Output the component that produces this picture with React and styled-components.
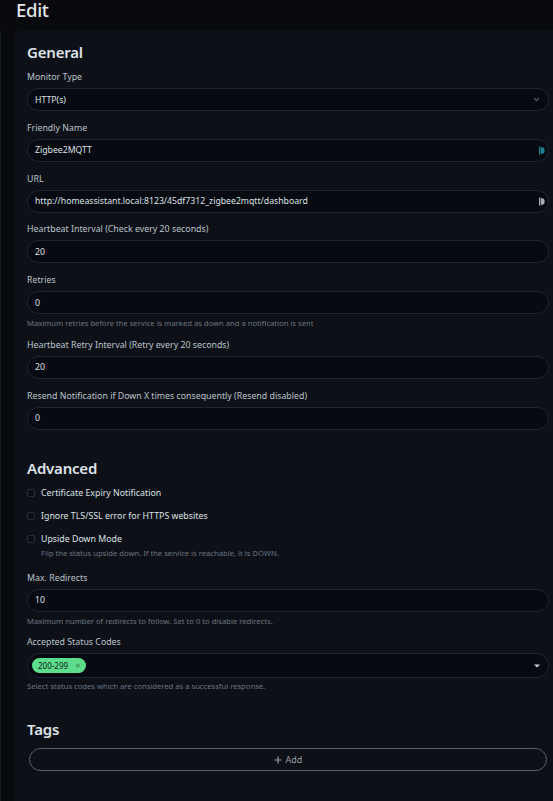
import React from 'react';
import styled, { createGlobalStyle } from 'styled-components';

const GlobalStyle = createGlobalStyle`
  html, body {
    margin: 0;
    padding: 0;
    background: #080a0e;
    overflow: hidden;
  }
  body {
    font-family: "Noto Sans", "Open Sans", sans-serif;
  }
`;

const Page = styled.div`
  display: flex;
  flex-direction: column;
  height: 801px;
`;

const Title = styled.h1`
  margin: 0 0 11px;
  padding-left: 16px;
  font-size: 18.5px;
  line-height: 20px;
  letter-spacing: -0.3px;
  font-weight: 500;
  color: #e1e4e8;
`;

const Body = styled.div`
  display: flex;
  flex: 1;
  border-left: 1px solid #14181e;
  padding-left: 14px;
`;

const Card = styled.div`
  flex: none;
  width: 546px;
  box-sizing: border-box;
  padding: 11px 12px 40px;
  background: #0d1117;
  border-radius: 4px 0 0 0;
`;

const SectionTitle = styled.h2`
  margin: ${(p) => (p.first ? '0' : '28px')} 0 9px;
  font-size: 15px;
  line-height: 20px;
  letter-spacing: -0.2px;
  font-weight: 600;
  color: #dfe3ea;
`;

const Group = styled.div`
  margin-bottom: 10.75px;
`;

const Label = styled.div`
  font-size: 8.8px;
  line-height: 12px;
  color: #bcc3cb;
  margin-bottom: 5px;
`;

const Field = styled.div`
  display: flex;
  align-items: center;
  height: ${(p) => (p.tall ? '25px' : '23px')};
  box-sizing: border-box;
  padding: ${(p) => (p.tall ? '0 8px 0 4px' : '0 3px 0 7px')};
  background: #070a10;
  border: 1px solid #1d2634;
  border-radius: 13px;
`;

const Value = styled.span`
  flex: 1;
  font-size: 8.7px;
  color: #dde1e6;
  white-space: nowrap;
`;

const Help = styled.div`
  margin-top: ${(p) => (p.tight ? '3px' : '4px')};
  padding-left: ${(p) => (p.indent ? '14px' : '0')};
  font-size: 7.65px;
  line-height: 10px;
  color: #6b7380;
`;

const CheckBlock = styled.div`
  margin: 2px 0 14px;
`;

const CheckRow = styled.label`
  display: flex;
  align-items: center;
  gap: 6px;
  height: 12px;
  margin-bottom: ${(p) => (p.last ? '0' : '11px')};
  font-size: 8.8px;
  color: #dde1e6;
`;

const Box = styled.span`
  width: 8px;
  height: 8px;
  box-sizing: border-box;
  border: 1px solid #262d3a;
  border-radius: 2px;
  background: #0a0d13;
`;

const Chip = styled.span`
  display: inline-flex;
  align-items: center;
  gap: 7px;
  height: 15px;
  padding: 0 5px 0 6px;
  border-radius: 8px;
  background: #5cdd8b;
  color: #0f1a14;
  font-size: 8px;
`;

const ChipX = styled.span`
  font-size: 7px;
  color: #3f7d55;
`;

const AddButton = styled.button`
  display: flex;
  align-items: center;
  justify-content: center;
  gap: 4px;
  width: calc(100% - 4px);
  margin: 0 2px;
  height: 23px;
  box-sizing: border-box;
  border: 1px solid #5a606a;
  border-radius: 12px;
  background: transparent;
  color: #9aa0a8;
  font-family: inherit;
  font-size: 9px;
`;

const Chevron = () => (
  <svg width="7" height="5" viewBox="0 0 7 5" style={{ marginRight: 5 }}>
    <path d="M1 1.2l2.5 2.5L6 1.2" fill="none" stroke="#5d636c" strokeWidth="1.1" />
  </svg>
);

const Caret = () => (
  <svg width="6" height="4" viewBox="0 0 6 4">
    <path d="M0 0.5h6L3 3.5z" fill="#cfd3d9" />
  </svg>
);

const FillIcon = ({ color }) => (
  <svg width="6" height="9" viewBox="0 0 6 9">
    <rect x="0" y="0.5" width="1.4" height="8" fill={color} />
    <path d="M2 1.2h1a2.6 3.3 0 0 1 0 6.6h-1z" fill={color} />
  </svg>
);

const Plus = () => (
  <svg width="8" height="8" viewBox="0 0 8 8">
    <path d="M4 0.5v7M0.5 4h7" stroke="#9aa0a8" strokeWidth="1.2" />
  </svg>
);

const TextGroup = ({ label, value, help, icon }) => (
  <Group>
    <Label>{label}</Label>
    <Field>
      <Value>{value}</Value>
      {icon}
    </Field>
    {help && <Help>{help}</Help>}
  </Group>
);

const App = () => (
  <Page>
    <GlobalStyle />
    <Title>Edit</Title>
    <Body>
      <Card>
        <SectionTitle first>General</SectionTitle>
        <Group>
          <Label>Monitor Type</Label>
          <Field>
            <Value>HTTP(s)</Value>
            <Chevron />
          </Field>
        </Group>
        <TextGroup label="Friendly Name" value="Zigbee2MQTT" icon={<FillIcon color="#1f7f91" />} />
        <TextGroup
          label="URL"
          value="http://homeassistant.local:8123/45df7312_zigbee2mqtt/dashboard"
          icon={<FillIcon color="#a9adb3" />}
        />
        <TextGroup label="Heartbeat Interval (Check every 20 seconds)" value="20" />
        <TextGroup
          label="Retries"
          value="0"
          help="Maximum retries before the service is marked as down and a notification is sent"
        />
        <TextGroup label="Heartbeat Retry Interval (Retry every 20 seconds)" value="20" />
        <TextGroup label="Resend Notification if Down X times consequently (Resend disabled)" value="0" />

        <SectionTitle>Advanced</SectionTitle>
        <CheckBlock>
          <CheckRow>
            <Box />
            Certificate Expiry Notification
          </CheckRow>
          <CheckRow>
            <Box />
            Ignore TLS/SSL error for HTTPS websites
          </CheckRow>
          <CheckRow last>
            <Box />
            Upside Down Mode
          </CheckRow>
          <Help tight indent>
            Flip the status upside down. If the service is reachable, it is DOWN.
          </Help>
        </CheckBlock>
        <TextGroup
          label="Max. Redirects"
          value="10"
          help="Maximum number of redirects to follow. Set to 0 to disable redirects."
        />
        <Group>
          <Label>Accepted Status Codes</Label>
          <Field tall>
            <Value>
              <Chip>
                200-299
                <ChipX>✕</ChipX>
              </Chip>
            </Value>
            <Caret />
          </Field>
          <Help tight>Select status codes which are considered as a successful response.</Help>
        </Group>

        <SectionTitle>Tags</SectionTitle>
        <AddButton>
          <Plus />
          Add
        </AddButton>
      </Card>
    </Body>
  </Page>
);

export default App;
